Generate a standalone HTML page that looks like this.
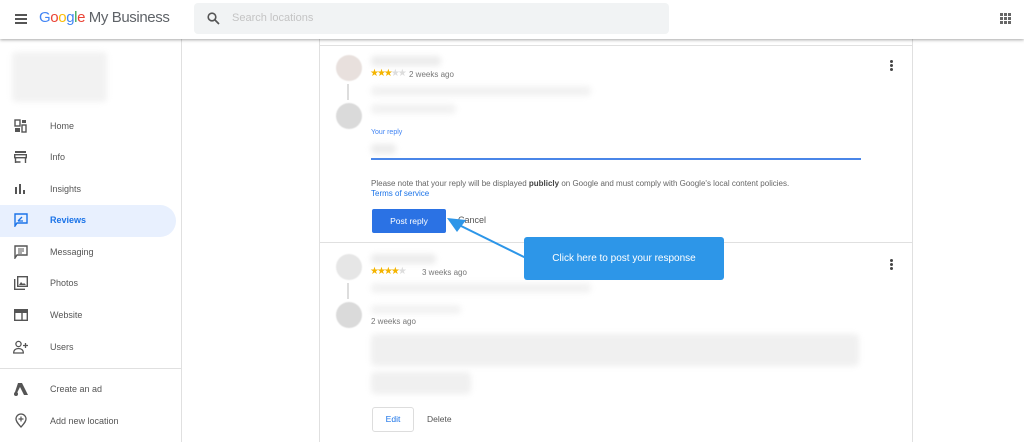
<!DOCTYPE html>
<html><head><meta charset="utf-8"><style>
*{margin:0;padding:0;box-sizing:border-box}
body{width:1024px;height:442px;overflow:hidden;background:#fff;font-family:"Liberation Sans",Arial,sans-serif;position:relative}
.a{position:absolute}
.blur{position:absolute;background:#ececec;filter:blur(3px);border-radius:4px}
.nav{position:absolute;left:50px;font-size:9px;color:#555}
.av{position:absolute;width:26px;height:26px;border-radius:50%;background:#ddd;filter:blur(.6px)}
.star{font-size:10px;letter-spacing:-2px;white-space:nowrap;line-height:10px}
.sm{font-size:8px;color:#777;white-space:nowrap}
</style></head><body>
<div class="a" style="left:0;top:0;width:1024px;height:39px;background:#fff;box-shadow:0 1px 3px rgba(0,0,0,.35);z-index:2">
 <div class="a" style="left:15px;top:14px;width:12px;height:2px;background:#555;box-shadow:0 4px 0 #555,0 8px 0 #555"></div>
 <div class="a" style="left:39px;top:9px;font-size:15px;letter-spacing:-0.4px;color:#5f6368;white-space:nowrap"><span style="color:#4285f4">G</span><span style="color:#ea4335">o</span><span style="color:#fbbc05">o</span><span style="color:#4285f4">g</span><span style="color:#34a853">l</span><span style="color:#ea4335">e</span> My Business</div>
 <div class="a" style="left:194px;top:3px;width:475px;height:31px;background:#f1f3f4;border-radius:4px">
  <svg class="a" style="left:13px;top:9px" width="13" height="13" viewBox="0 0 13 13"><circle cx="5" cy="5" r="3.8" fill="none" stroke="#555" stroke-width="1.6"/><path d="M8 8l4 4" stroke="#555" stroke-width="1.7"/></svg>
  <div class="a" style="left:38px;top:9px;font-size:11px;color:#c4c4c4">Search locations</div>
 </div>
 <div class="a" style="left:1000px;top:13px;width:3px;height:3px;background:#666;box-shadow:4px 0 #666,8px 0 #666,0 4px #666,4px 4px #666,8px 4px #666,0 8px #666,4px 8px #666,8px 8px #666"></div>
</div>
<div class="a" style="left:181px;top:39px;width:1px;height:403px;background:#e0e0e0"></div>
<div class="blur" style="left:12px;top:52px;width:95px;height:50px;background:#f2f2f2"></div>
<div class="a" style="left:0;top:205px;width:176px;height:32px;background:#e8f0fe;border-radius:0 16px 16px 0"></div>
<div class="a" style="left:0;top:368px;width:181px;height:1px;background:#e0e0e0"></div>
<svg class="a" style="left:14px;top:119px" width="13" height="14"><rect x="1" y="1" width="5" height="6" fill="none" stroke="#555" stroke-width="1.4"/><rect x="8" y="1" width="4" height="3" fill="#555"/><rect x="1" y="9" width="5" height="4" fill="#555"/><rect x="8" y="6" width="4" height="7" fill="none" stroke="#555" stroke-width="1.4"/></svg>
<div class="nav" style="top:121px">Home</div>
<svg class="a" style="left:14px;top:151px" width="13" height="12"><rect x="1" y="0" width="11" height="2" fill="#555"/><rect x="0.7" y="3.7" width="11.6" height="3" fill="none" stroke="#555" stroke-width="1.4"/><path d="M1.5 7v5M11.5 7v5M1.5 11h5" stroke="#555" stroke-width="1.4"/></svg>
<div class="nav" style="top:152px">Info</div>
<svg class="a" style="left:15px;top:183px" width="12" height="12"><rect x="0" y="4" width="2" height="7" fill="#555"/><rect x="4" y="1" width="2" height="10" fill="#555"/><rect x="8" y="7" width="2" height="4" fill="#555"/></svg>
<div class="nav" style="top:184px">Insights</div>
<svg class="a" style="left:14px;top:213px" width="14" height="14"><path d="M1 1h12v9H3l-2 3z" fill="none" stroke="#1a73e8" stroke-width="1.4"/><path d="M4 8l4-4M4 8h5" stroke="#1a73e8" stroke-width="1.3"/></svg>
<div class="nav" style="top:215px;color:#1a73e8;font-weight:bold">Reviews</div>
<svg class="a" style="left:14px;top:245px" width="14" height="14"><path d="M1 1h12v9H3l-2 3z" fill="none" stroke="#555" stroke-width="1.4"/><path d="M4 4h6M4 6h6M4 8h4" stroke="#555" stroke-width="1"/></svg>
<div class="nav" style="top:247px">Messaging</div>
<svg class="a" style="left:14px;top:276px" width="14" height="14"><rect x="3.7" y="0.7" width="9.6" height="9.6" fill="none" stroke="#555" stroke-width="1.4"/><path d="M0.7 3v10.3H11" fill="none" stroke="#555" stroke-width="1.4"/><path d="M5 9l2-3 2 2 1-1 2 2z" fill="#555"/></svg>
<div class="nav" style="top:278px">Photos</div>
<svg class="a" style="left:14px;top:309px" width="14" height="12"><rect x="0.7" y="0.7" width="12.6" height="10.6" fill="none" stroke="#555" stroke-width="1.4"/><rect x="1" y="1" width="12" height="3" fill="#555"/><path d="M8 4v7" stroke="#555" stroke-width="1.4"/></svg>
<div class="nav" style="top:310px">Website</div>
<svg class="a" style="left:13px;top:340px" width="16" height="14"><circle cx="5.5" cy="4" r="2.6" fill="none" stroke="#555" stroke-width="1.3"/><path d="M0.7 13c0-3 2-4.5 4.8-4.5s4.8 1.5 4.8 4.5z" fill="none" stroke="#555" stroke-width="1.3"/><path d="M12.5 3v5M10 5.5h5" stroke="#555" stroke-width="1.3"/></svg>
<div class="nav" style="top:342px">Users</div>
<svg class="a" style="left:13px;top:382px" width="16" height="14"><path d="M5 1h4l6 12H11L7 5 3 13H1z" fill="#555"/><circle cx="3" cy="12" r="2" fill="#555"/></svg>
<div class="nav" style="top:384px">Create an ad</div>
<svg class="a" style="left:15px;top:413px" width="12" height="15"><path d="M6 14C3 10.5 1 8.5 1 6a5 5 0 0 1 10 0c0 2.5-2 4.5-5 8z" fill="none" stroke="#555" stroke-width="1.3"/><path d="M6 3.5v5M3.5 6h5" stroke="#555" stroke-width="1.2"/></svg>
<div class="nav" style="top:416px">Add new location</div>
<div class="a" style="left:319px;top:39px;width:594px;height:403px;border-left:1px solid #e0e0e0;border-right:1px solid #e0e0e0"></div>
<div class="a" style="left:320px;top:45px;width:592px;height:1px;background:#e0e0e0"></div>
<div class="a" style="left:320px;top:242px;width:592px;height:1px;background:#e0e0e0"></div>
<div class="av" style="left:336px;top:55px;background:#e8e0dd"></div>
<div class="blur" style="left:371px;top:56px;width:70px;height:10px"></div>
<div class="a star" style="left:370px;top:69px;color:#f4b400">★★★<span style="color:#ddd">★★</span></div>
<div class="a sm" style="left:409px;top:70px">2 weeks ago</div>
<div class="a" style="left:347px;top:84px;width:2px;height:16px;background:#ddd"></div>
<div class="blur" style="left:371px;top:86px;width:220px;height:10px;background:#f2f2f2"></div>
<div class="av" style="left:336px;top:103px;background:#dadada"></div>
<div class="blur" style="left:371px;top:104px;width:85px;height:10px;background:#f2f2f2"></div>
<div class="a" style="left:371px;top:129px;font-size:7px;color:#4285f4">Your reply</div>
<div class="blur" style="left:371px;top:144px;width:25px;height:10px"></div>
<div class="a" style="left:371px;top:158px;width:490px;height:2px;background:#4a86e8"></div>
<div class="a" style="left:371px;top:179px;font-size:8px;color:#666;white-space:nowrap">Please note that your reply will be displayed <b style="color:#444">publicly</b> on Google and must comply with Google's local content policies.</div>
<div class="a" style="left:371px;top:189px;font-size:8px;color:#1a73e8">Terms of service</div>
<div class="a" style="left:372px;top:209px;width:74px;height:24px;background:#2b72e4;border-radius:2px;color:#fff;font-size:8.5px;text-align:center;line-height:24px">Post reply</div>
<div class="a" style="left:458px;top:215px;font-size:9px;color:#555">Cancel</div>
<div class="a" style="left:890px;top:60px;width:3px;height:3px;border-radius:50%;background:#444;box-shadow:0 4px #444,0 8px #444"></div>
<div class="av" style="left:336px;top:254px;background:#e6e6e6"></div>
<div class="blur" style="left:371px;top:254px;width:65px;height:10px"></div>
<div class="a star" style="left:370px;top:267px;color:#f4b400">★★★★<span style="color:#ddd">★</span></div>
<div class="a sm" style="left:422px;top:268px">3 weeks ago</div>
<div class="a" style="left:347px;top:283px;width:2px;height:16px;background:#ddd"></div>
<div class="blur" style="left:371px;top:283px;width:220px;height:10px;background:#f2f2f2"></div>
<div class="av" style="left:336px;top:302px;background:#dadada"></div>
<div class="blur" style="left:371px;top:305px;width:90px;height:9px;background:#f2f2f2"></div>
<div class="a sm" style="left:371px;top:317px">2 weeks ago</div>
<div class="blur" style="left:371px;top:334px;width:488px;height:32px;background:#f0f0f0"></div>
<div class="blur" style="left:371px;top:372px;width:100px;height:22px;background:#f0f0f0"></div>
<div class="a" style="left:372px;top:407px;width:42px;height:25px;border:1px solid #ddd;border-radius:3px;color:#1a73e8;font-size:8.5px;text-align:center;line-height:23px">Edit</div>
<div class="a" style="left:427px;top:414px;font-size:8.5px;color:#555">Delete</div>
<div class="a" style="left:890px;top:259px;width:3px;height:3px;border-radius:50%;background:#444;box-shadow:0 4px #444,0 8px #444"></div>
<svg class="a" style="left:440px;top:210px" width="100" height="60"><path d="M86 48L15 13" stroke="#2d96e8" stroke-width="2"/><path d="M7 8l19 2-9 12z" fill="#2d96e8"/></svg>
<div class="a" style="left:524px;top:237px;width:200px;height:43px;background:#2d96e8;border-radius:3px;color:#fff;font-size:10px;text-align:center;line-height:43px">Click here to post your response</div>
</body></html>
